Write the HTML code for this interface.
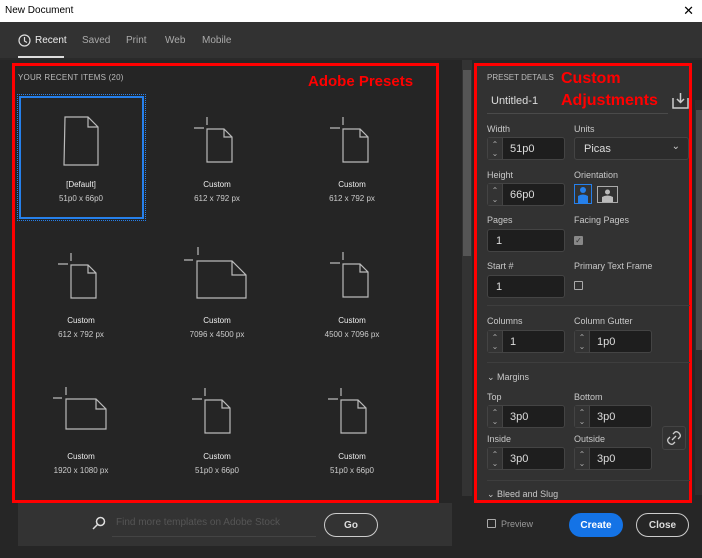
<!DOCTYPE html>
<html><head><meta charset="utf-8"><style>
*{margin:0;padding:0;box-sizing:border-box}
body{width:702px;height:558px;overflow:hidden;background:#262626;font-family:"Liberation Sans",sans-serif;position:relative;color:#ccc}
.a{position:absolute}
.lbl{position:absolute;font-size:9px;color:#c8c8c8}
.inp{position:absolute;height:23px;border:1px solid #444;border-radius:3px;background:#1e1e1e}
.inp .st{position:absolute;left:0;top:0;bottom:0;width:15px;background:#333;border-right:1px solid #444;color:#aaa;font-size:8px;line-height:9px;text-align:center;padding-top:2px}
.inp .v{position:absolute;left:22px;top:5px;font-size:11px;color:#ddd}
.it{position:absolute;text-align:center;width:130px;font-size:8px;color:#ccc;line-height:14px}
.it b{font-weight:normal;color:#eee}
.chk{position:absolute;width:9px;height:9px;border:1px solid #aaa;border-radius:1px}
.sep{position:absolute;left:487px;width:203px;height:1px;background:#3e3e3e}
.btn{position:absolute;display:flex;align-items:center;justify-content:center;border-radius:12px;font-size:10px;font-weight:bold}
</style></head><body>
<div class="a" style="left:0;top:0;width:702px;height:22px;background:#fff;color:#000;font-size:10px;padding:5px 5px">New Document<span class="a" style="right:8px;top:3px;font-size:13px">✕</span></div>
<div class="a" style="left:0;top:22px;width:702px;height:36px;background:#323232"></div>
<div class="a" style="left:0;top:58px;width:702px;height:2px;background:#2a2a2a"></div>
<svg class="a" style="left:18px;top:34px" width="13" height="13"><circle cx="6.5" cy="6.5" r="5.5" fill="none" stroke="#ddd" stroke-width="1.2"/><path d="M6.5 3v4l2.5 1.5" fill="none" stroke="#ddd" stroke-width="1.2"/></svg>
<div class="a" style="left:35px;top:35px;font-size:10px;color:#eee">Recent</div>
<div class="a" style="left:18px;top:56px;width:46px;height:2px;background:#ddd"></div>
<div class="a" style="left:82px;top:35px;font-size:10px;color:#aaa">Saved</div>
<div class="a" style="left:126px;top:35px;font-size:10px;color:#aaa">Print</div>
<div class="a" style="left:165px;top:35px;font-size:10px;color:#aaa">Web</div>
<div class="a" style="left:202px;top:35px;font-size:10px;color:#aaa">Mobile</div>
<div class="a" style="left:12px;top:63px;width:427px;height:440px;border:3px solid #f00;background:#252525"></div>
<div class="a" style="left:18px;top:73px;font-size:8px;color:#bbb;letter-spacing:.2px">YOUR RECENT ITEMS  (20)</div>
<div class="a" style="left:308px;top:73px;font-size:15px;font-weight:bold;color:#f00">Adobe Presets</div>
<div class="a" style="left:19px;top:96px;width:125px;height:123px;border:2px solid #2680eb;outline:1px dotted #2680eb;outline-offset:1px"></div>
<svg class="a" style="left:0;top:0" width="450" height="500" fill="none" stroke="#bbb" stroke-width="1.2">
<path d="M65 117h23l10 10v38h-34z M88 117v10h10"/>
<g id="p1"><path d="M194 128h10 M207 117v8 M207 129h17l8 8v25h-25z M224 129v8h8"/></g>
<use href="#p1" x="136"/>
<use href="#p1" x="-136" y="136"/>
<path d="M184 260h9 M198 247v8 M197 261h35l14 14v23h-49z M232 261v14h14"/>
<use href="#p1" x="136" y="135"/>
<path d="M53 398h9 M66 387v8 M66 399h30l10 10v20h-40z M96 399v10h10"/>
<use href="#p1" x="-2" y="271"/>
<use href="#p1" x="134" y="271"/>
</svg>
<div class="it" style="left:16px;top:178px"><b>[Default]</b><br>51p0 x 66p0</div>
<div class="it" style="left:152px;top:178px"><b>Custom</b><br>612 x 792 px</div>
<div class="it" style="left:287px;top:178px"><b>Custom</b><br>612 x 792 px</div>
<div class="it" style="left:16px;top:314px"><b>Custom</b><br>612 x 792 px</div>
<div class="it" style="left:152px;top:314px"><b>Custom</b><br>7096 x 4500 px</div>
<div class="it" style="left:287px;top:314px"><b>Custom</b><br>4500 x 7096 px</div>
<div class="it" style="left:16px;top:450px"><b>Custom</b><br>1920 x 1080 px</div>
<div class="it" style="left:152px;top:450px"><b>Custom</b><br>51p0 x 66p0</div>
<div class="it" style="left:287px;top:450px"><b>Custom</b><br>51p0 x 66p0</div>
<div class="a" style="left:462px;top:60px;width:10px;height:436px;background:#333"></div>
<div class="a" style="left:463px;top:70px;width:8px;height:186px;background:#555"></div>
<div class="a" style="left:18px;top:503px;width:434px;height:43px;background:#333"></div>
<svg class="a" style="left:92px;top:516px" width="14" height="14" fill="none" stroke="#ddd" stroke-width="1.5"><circle cx="8.5" cy="5.5" r="4"/><path d="M5.5 8.5L1 13"/></svg>
<div class="a" style="left:116px;top:517px;font-size:10px;color:#555">Find more templates on Adobe Stock</div>
<div class="a" style="left:112px;top:536px;width:204px;height:1px;background:#444"></div>
<div class="btn" style="left:324px;top:513px;width:54px;height:24px;border:1.5px solid #ccc;color:#ddd">Go</div>
<div class="a" style="left:474px;top:63px;width:218px;height:440px;border:3px solid #f00;background:#323232"></div>
<div class="a" style="left:695px;top:100px;width:7px;height:395px;background:#2e2e2e"></div>
<div class="a" style="left:696px;top:110px;width:6px;height:240px;background:#4a4a4a"></div>
<div class="a" style="left:487px;top:73px;font-size:8px;color:#bbb">PRESET DETAILS</div>
<div class="a" style="left:561px;top:68px;font-size:16px;font-weight:bold;color:#f00;line-height:22px">Custom<br>Adjustments</div>
<div class="a" style="left:491px;top:95px;font-size:11px;color:#ddd">Untitled-1</div>
<div class="sep" style="top:113px;width:181px;background:#4a4a4a"></div>
<svg class="a" style="left:672px;top:92px" width="17" height="17" fill="none" stroke="#ccc" stroke-width="1.5"><path d="M1 6v10h15V6 M8.5 1v9 M5 7l3.5 3.5L12 7"/></svg>
<div class="lbl" style="left:487px;top:124px">Width</div><div class="lbl" style="left:574px;top:124px">Units</div>
<div class="inp" style="left:487px;top:137px;width:78px"><div class="st">⌃<br>⌄</div><div class="v">51p0</div></div>
<div class="inp" style="left:574px;top:137px;width:115px;background:#2c2c2c"><div class="v" style="left:9px">Picas</div><div class="a" style="right:8px;top:3px;font-size:10px;color:#ccc">⌄</div></div>
<div class="lbl" style="left:487px;top:170px">Height</div><div class="lbl" style="left:574px;top:170px">Orientation</div>
<div class="inp" style="left:487px;top:183px;width:78px"><div class="st">⌃<br>⌄</div><div class="v">66p0</div></div>
<svg class="a" style="left:574px;top:184px" width="45" height="20"><rect x=".5" y=".5" width="17" height="19" fill="#333" stroke="#2680eb"/><circle cx="9" cy="6" r="3" fill="#2680eb"/><path d="M4 19v-7q5-3 10 0v7z" fill="#2680eb"/><rect x="23.5" y="2.5" width="20" height="16" fill="none" stroke="#aaa"/><circle cx="33.5" cy="8" r="2.5" fill="#bbb"/><path d="M28 18v-5q5.5-3 11 0v5z" fill="#bbb"/></svg>
<div class="lbl" style="left:487px;top:215px">Pages</div><div class="lbl" style="left:574px;top:215px">Facing Pages</div>
<div class="inp" style="left:487px;top:229px;width:78px"><div class="v" style="left:8px">1</div></div>
<div class="chk" style="left:574px;top:236px;background:#888;border-color:#888;font-size:8px;color:#333;line-height:7px;text-align:center">✓</div>
<div class="lbl" style="left:487px;top:261px">Start #</div><div class="lbl" style="left:574px;top:261px">Primary Text Frame</div>
<div class="inp" style="left:487px;top:275px;width:78px"><div class="v" style="left:8px">1</div></div>
<div class="chk" style="left:574px;top:281px"></div>
<div class="sep" style="top:305px"></div>
<div class="lbl" style="left:487px;top:316px">Columns</div><div class="lbl" style="left:574px;top:316px">Column Gutter</div>
<div class="inp" style="left:487px;top:330px;width:78px"><div class="st">⌃<br>⌄</div><div class="v">1</div></div>
<div class="inp" style="left:574px;top:330px;width:78px"><div class="st">⌃<br>⌄</div><div class="v">1p0</div></div>
<div class="sep" style="top:362px"></div>
<div class="lbl" style="left:487px;top:372px">⌄ Margins</div>
<div class="lbl" style="left:487px;top:392px">Top</div><div class="lbl" style="left:574px;top:392px">Bottom</div>
<div class="inp" style="left:487px;top:405px;width:78px"><div class="st">⌃<br>⌄</div><div class="v">3p0</div></div>
<div class="inp" style="left:574px;top:405px;width:78px"><div class="st">⌃<br>⌄</div><div class="v">3p0</div></div>
<div class="lbl" style="left:487px;top:434px">Inside</div><div class="lbl" style="left:574px;top:434px">Outside</div>
<div class="inp" style="left:487px;top:447px;width:78px"><div class="st">⌃<br>⌄</div><div class="v">3p0</div></div>
<div class="inp" style="left:574px;top:447px;width:78px"><div class="st">⌃<br>⌄</div><div class="v">3p0</div></div>
<div class="a" style="left:662px;top:426px;width:24px;height:24px;border:1px solid #444;border-radius:3px"></div>
<svg class="a" style="left:667px;top:431px" width="14" height="14" fill="none" stroke="#ccc" stroke-width="1.3"><path d="M6 3l2-2q2-1 4 1t1 4l-2 2 M8 11l-2 2q-2 1-4-1t-1-4l2-2 M5 9l4-4"/></svg>
<div class="sep" style="top:480px"></div>
<div class="lbl" style="left:487px;top:489px">⌄ Bleed and Slug</div>
<div class="chk" style="left:487px;top:519px;width:9px;height:9px"></div>
<div class="a" style="left:501px;top:519px;font-size:9px;color:#999">Preview</div>
<div class="btn" style="left:569px;top:513px;width:54px;height:24px;background:#1473e6;color:#fff">Create</div>
<div class="btn" style="left:636px;top:513px;width:53px;height:24px;border:1.5px solid #ccc;color:#ddd">Close</div>
</body></html>
